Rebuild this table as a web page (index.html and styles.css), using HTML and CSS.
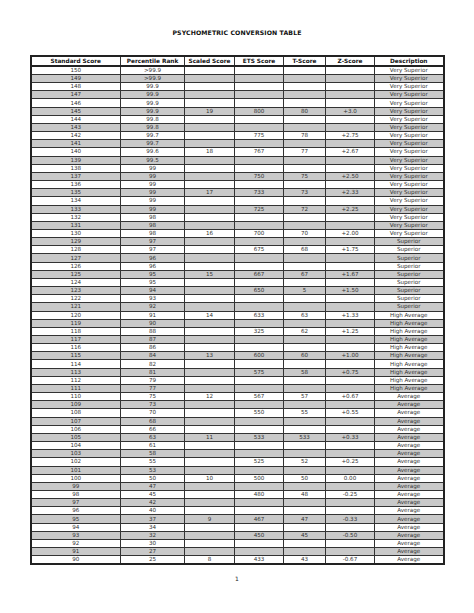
FILE: index.html
```html
<!DOCTYPE html>
<html>
<head>
<meta charset="utf-8">
<link rel="stylesheet" href="styles.css">
<title>Psychometric Conversion Table</title>
</head>
<body>
<div class="page">
  <h1 class="title">PSYCHOMETRIC CONVERSION TABLE</h1>
  <table class="conv">
    <colgroup>
      <col class="c-std"><col class="c-pct"><col class="c-scl"><col class="c-ets"><col class="c-t"><col class="c-z"><col class="c-desc">
    </colgroup>
    <thead>
      <tr><th>Standard Score</th><th>Percentile Rank</th><th>Scaled Score</th><th>ETS Score</th><th>T-Score</th><th>Z-Score</th><th>Description</th></tr>
    </thead>
    <tbody>
      <tr><td>150</td><td>&gt;99.9</td><td></td><td></td><td></td><td></td><td>Very Superior</td></tr>
      <tr><td>149</td><td>&gt;99.9</td><td></td><td></td><td></td><td></td><td>Very Superior</td></tr>
      <tr><td>148</td><td>99.9</td><td></td><td></td><td></td><td></td><td>Very Superior</td></tr>
      <tr><td>147</td><td>99.9</td><td></td><td></td><td></td><td></td><td>Very Superior</td></tr>
      <tr><td>146</td><td>99.9</td><td></td><td></td><td></td><td></td><td>Very Superior</td></tr>
      <tr><td>145</td><td>99.9</td><td>19</td><td>800</td><td>80</td><td>+3.0</td><td>Very Superior</td></tr>
      <tr><td>144</td><td>99.8</td><td></td><td></td><td></td><td></td><td>Very Superior</td></tr>
      <tr><td>143</td><td>99.8</td><td></td><td></td><td></td><td></td><td>Very Superior</td></tr>
      <tr><td>142</td><td>99.7</td><td></td><td>775</td><td>78</td><td>+2.75</td><td>Very Superior</td></tr>
      <tr><td>141</td><td>99.7</td><td></td><td></td><td></td><td></td><td>Very Superior</td></tr>
      <tr><td>140</td><td>99.6</td><td>18</td><td>767</td><td>77</td><td>+2.67</td><td>Very Superior</td></tr>
      <tr><td>139</td><td>99.5</td><td></td><td></td><td></td><td></td><td>Very Superior</td></tr>
      <tr><td>138</td><td>99</td><td></td><td></td><td></td><td></td><td>Very Superior</td></tr>
      <tr><td>137</td><td>99</td><td></td><td>750</td><td>75</td><td>+2.50</td><td>Very Superior</td></tr>
      <tr><td>136</td><td>99</td><td></td><td></td><td></td><td></td><td>Very Superior</td></tr>
      <tr><td>135</td><td>99</td><td>17</td><td>733</td><td>73</td><td>+2.33</td><td>Very Superior</td></tr>
      <tr><td>134</td><td>99</td><td></td><td></td><td></td><td></td><td>Very Superior</td></tr>
      <tr><td>133</td><td>99</td><td></td><td>725</td><td>72</td><td>+2.25</td><td>Very Superior</td></tr>
      <tr><td>132</td><td>98</td><td></td><td></td><td></td><td></td><td>Very Superior</td></tr>
      <tr><td>131</td><td>98</td><td></td><td></td><td></td><td></td><td>Very Superior</td></tr>
      <tr><td>130</td><td>98</td><td>16</td><td>700</td><td>70</td><td>+2.00</td><td>Very Superior</td></tr>
      <tr><td>129</td><td>97</td><td></td><td></td><td></td><td></td><td>Superior</td></tr>
      <tr><td>128</td><td>97</td><td></td><td>675</td><td>68</td><td>+1.75</td><td>Superior</td></tr>
      <tr><td>127</td><td>96</td><td></td><td></td><td></td><td></td><td>Superior</td></tr>
      <tr><td>126</td><td>96</td><td></td><td></td><td></td><td></td><td>Superior</td></tr>
      <tr><td>125</td><td>95</td><td>15</td><td>667</td><td>67</td><td>+1.67</td><td>Superior</td></tr>
      <tr><td>124</td><td>95</td><td></td><td></td><td></td><td></td><td>Superior</td></tr>
      <tr><td>123</td><td>94</td><td></td><td>650</td><td>5</td><td>+1.50</td><td>Superior</td></tr>
      <tr><td>122</td><td>93</td><td></td><td></td><td></td><td></td><td>Superior</td></tr>
      <tr><td>121</td><td>92</td><td></td><td></td><td></td><td></td><td>Superior</td></tr>
      <tr><td>120</td><td>91</td><td>14</td><td>633</td><td>63</td><td>+1.33</td><td>High Average</td></tr>
      <tr><td>119</td><td>90</td><td></td><td></td><td></td><td></td><td>High Average</td></tr>
      <tr><td>118</td><td>88</td><td></td><td>325</td><td>62</td><td>+1.25</td><td>High Average</td></tr>
      <tr><td>117</td><td>87</td><td></td><td></td><td></td><td></td><td>High Average</td></tr>
      <tr><td>116</td><td>86</td><td></td><td></td><td></td><td></td><td>High Average</td></tr>
      <tr><td>115</td><td>84</td><td>13</td><td>600</td><td>60</td><td>+1.00</td><td>High Average</td></tr>
      <tr><td>114</td><td>82</td><td></td><td></td><td></td><td></td><td>High Average</td></tr>
      <tr><td>113</td><td>81</td><td></td><td>575</td><td>58</td><td>+0.75</td><td>High Average</td></tr>
      <tr><td>112</td><td>79</td><td></td><td></td><td></td><td></td><td>High Average</td></tr>
      <tr><td>111</td><td>77</td><td></td><td></td><td></td><td></td><td>High Average</td></tr>
      <tr><td>110</td><td>75</td><td>12</td><td>567</td><td>57</td><td>+0.67</td><td>Average</td></tr>
      <tr><td>109</td><td>73</td><td></td><td></td><td></td><td></td><td>Average</td></tr>
      <tr><td>108</td><td>70</td><td></td><td>550</td><td>55</td><td>+0.55</td><td>Average</td></tr>
      <tr><td>107</td><td>68</td><td></td><td></td><td></td><td></td><td>Average</td></tr>
      <tr><td>106</td><td>66</td><td></td><td></td><td></td><td></td><td>Average</td></tr>
      <tr><td>105</td><td>63</td><td>11</td><td>533</td><td>533</td><td>+0.33</td><td>Average</td></tr>
      <tr><td>104</td><td>61</td><td></td><td></td><td></td><td></td><td>Average</td></tr>
      <tr><td>103</td><td>58</td><td></td><td></td><td></td><td></td><td>Average</td></tr>
      <tr><td>102</td><td>55</td><td></td><td>525</td><td>52</td><td>+0.25</td><td>Average</td></tr>
      <tr><td>101</td><td>53</td><td></td><td></td><td></td><td></td><td>Average</td></tr>
      <tr><td>100</td><td>50</td><td>10</td><td>500</td><td>50</td><td>0.00</td><td>Average</td></tr>
      <tr><td>99</td><td>47</td><td></td><td></td><td></td><td></td><td>Average</td></tr>
      <tr><td>98</td><td>45</td><td></td><td>480</td><td>48</td><td>-0.25</td><td>Average</td></tr>
      <tr><td>97</td><td>42</td><td></td><td></td><td></td><td></td><td>Average</td></tr>
      <tr><td>96</td><td>40</td><td></td><td></td><td></td><td></td><td>Average</td></tr>
      <tr><td>95</td><td>37</td><td>9</td><td>467</td><td>47</td><td>-0.33</td><td>Average</td></tr>
      <tr><td>94</td><td>34</td><td></td><td></td><td></td><td></td><td>Average</td></tr>
      <tr><td>93</td><td>32</td><td></td><td>450</td><td>45</td><td>-0.50</td><td>Average</td></tr>
      <tr><td>92</td><td>30</td><td></td><td></td><td></td><td></td><td>Average</td></tr>
      <tr><td>91</td><td>27</td><td></td><td></td><td></td><td></td><td>Average</td></tr>
      <tr><td>90</td><td>25</td><td>8</td><td>433</td><td>43</td><td>-0.67</td><td>Average</td></tr>
    </tbody>
  </table>
  <div class="pagenum">1</div>
</div>
</body>
</html>
```
FILE: styles.css
```css
html, body {
  margin: 0;
  padding: 0;
  background: #ffffff;
}
body {
  font-family: "DejaVu Sans", Verdana, sans-serif;
  color: #333333;
}
.page {
  width: 474px;
  padding-top: 29px;
}
.title {
  margin: 0;
  font-size: 6.2px;
  line-height: 8px;
  font-weight: bold;
  text-align: center;
  color: #111;
  letter-spacing: 0.1px;
}
.conv {
  margin: 18px auto 0 auto;
  width: 414px;
  border-collapse: collapse;
  table-layout: fixed;
  border: 2px solid #222;
}
.c-std { width: 90px; }
.c-pct { width: 64px; }
.c-scl { width: 50px; }
.c-ets { width: 49px; }
.c-t { width: 42px; }
.c-z { width: 49px; }
.c-desc { width: 69px; }
.conv th, .conv td {
  padding: 0;
  text-align: center;
  white-space: nowrap;
  overflow: hidden;
  border: 1px solid #333;
}
.conv thead tr {
  height: 10px;
}
.conv th {
  font-size: 5.8px;
  line-height: 8px;
  font-weight: bold;
  color: #111;
  border-bottom: 2px solid #222;
}
.conv tbody tr {
  height: 8.16px;
}
.conv td {
  font-size: 5.6px;
  line-height: 7px;
}
.conv tbody tr:nth-child(even) {
  background: #c9c9c9;
}
.pagenum {
  margin-top: 10px;
  text-align: center;
  font-size: 6px;
  line-height: 8px;
  color: #222;
}
```
